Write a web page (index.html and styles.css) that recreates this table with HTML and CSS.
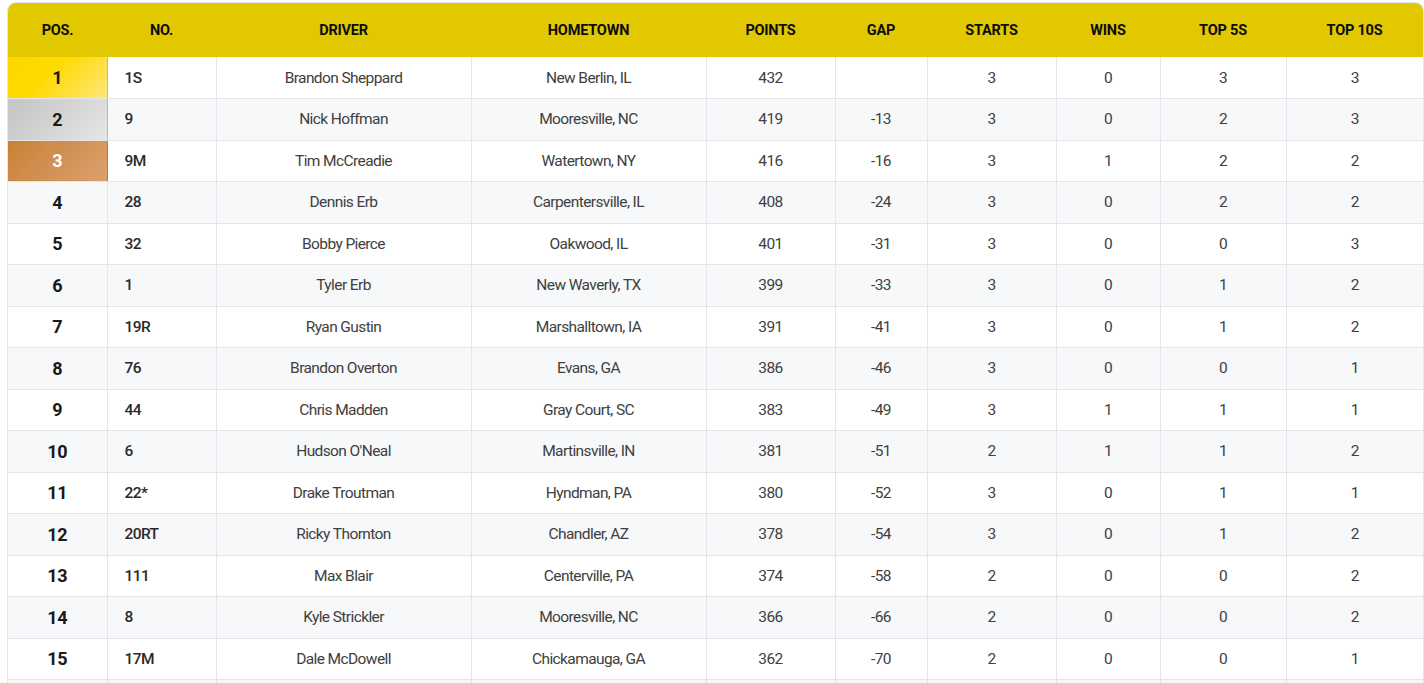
FILE: index.html
```html
<!DOCTYPE html>
<html lang="en">
<head>
<meta charset="utf-8">
<title>Points Standings</title>
<link rel="stylesheet" href="styles.css">
</head>
<body>
<div class="wrap">
<div class="card">
<table class="standings">
<colgroup>
<col class="c-pos"><col class="c-no"><col class="c-driver"><col class="c-home"><col class="c-pts"><col class="c-gap"><col class="c-starts"><col class="c-wins"><col class="c-t5"><col class="c-t10">
</colgroup>
<thead>
<tr><th>POS.</th><th>NO.</th><th>DRIVER</th><th>HOMETOWN</th><th>POINTS</th><th>GAP</th><th>STARTS</th><th>WINS</th><th>TOP 5S</th><th>TOP 10S</th></tr>
</thead>
<tbody>
<tr><td class="pos gold">1</td><td class="no">1S</td><td>Brandon Sheppard</td><td>New Berlin, IL</td><td>432</td><td></td><td>3</td><td>0</td><td>3</td><td>3</td></tr>
<tr><td class="pos silver">2</td><td class="no">9</td><td>Nick Hoffman</td><td>Mooresville, NC</td><td>419</td><td>-13</td><td>3</td><td>0</td><td>2</td><td>3</td></tr>
<tr><td class="pos bronze">3</td><td class="no">9M</td><td>Tim McCreadie</td><td>Watertown, NY</td><td>416</td><td>-16</td><td>3</td><td>1</td><td>2</td><td>2</td></tr>
<tr><td class="pos">4</td><td class="no">28</td><td>Dennis Erb</td><td>Carpentersville, IL</td><td>408</td><td>-24</td><td>3</td><td>0</td><td>2</td><td>2</td></tr>
<tr><td class="pos">5</td><td class="no">32</td><td>Bobby Pierce</td><td>Oakwood, IL</td><td>401</td><td>-31</td><td>3</td><td>0</td><td>0</td><td>3</td></tr>
<tr><td class="pos">6</td><td class="no">1</td><td>Tyler Erb</td><td>New Waverly, TX</td><td>399</td><td>-33</td><td>3</td><td>0</td><td>1</td><td>2</td></tr>
<tr><td class="pos">7</td><td class="no">19R</td><td>Ryan Gustin</td><td>Marshalltown, IA</td><td>391</td><td>-41</td><td>3</td><td>0</td><td>1</td><td>2</td></tr>
<tr><td class="pos">8</td><td class="no">76</td><td>Brandon Overton</td><td>Evans, GA</td><td>386</td><td>-46</td><td>3</td><td>0</td><td>0</td><td>1</td></tr>
<tr><td class="pos">9</td><td class="no">44</td><td>Chris Madden</td><td>Gray Court, SC</td><td>383</td><td>-49</td><td>3</td><td>1</td><td>1</td><td>1</td></tr>
<tr><td class="pos">10</td><td class="no">6</td><td>Hudson O'Neal</td><td>Martinsville, IN</td><td>381</td><td>-51</td><td>2</td><td>1</td><td>1</td><td>2</td></tr>
<tr><td class="pos">11</td><td class="no">22*</td><td>Drake Troutman</td><td>Hyndman, PA</td><td>380</td><td>-52</td><td>3</td><td>0</td><td>1</td><td>1</td></tr>
<tr><td class="pos">12</td><td class="no">20RT</td><td>Ricky Thornton</td><td>Chandler, AZ</td><td>378</td><td>-54</td><td>3</td><td>0</td><td>1</td><td>2</td></tr>
<tr><td class="pos">13</td><td class="no">111</td><td>Max Blair</td><td>Centerville, PA</td><td>374</td><td>-58</td><td>2</td><td>0</td><td>0</td><td>2</td></tr>
<tr><td class="pos">14</td><td class="no">8</td><td>Kyle Strickler</td><td>Mooresville, NC</td><td>366</td><td>-66</td><td>2</td><td>0</td><td>0</td><td>2</td></tr>
<tr><td class="pos">15</td><td class="no">17M</td><td>Dale McDowell</td><td>Chickamauga, GA</td><td>362</td><td>-70</td><td>2</td><td>0</td><td>0</td><td>1</td></tr>
<tr class="cut"><td></td><td></td><td></td><td></td><td></td><td></td><td></td><td></td><td></td><td></td></tr>
</tbody>
</table>
</div>
</div>
</body>
</html>
```
FILE: styles.css
```css
html, body {
  margin: 0;
  padding: 0;
  background: #ffffff;
}
body {
  font-family: Roboto, "Liberation Sans", sans-serif;
  color: #3a3a3a;
}
.wrap {
  padding: 2px 0 0 7px;
  width: 1417px;
  height: 681px;
  overflow: hidden;
}
.card {
  border: 1px solid #e3e5e9;
  border-radius: 9px 9px 0 0;
  overflow: hidden;
}
.standings {
  border-collapse: collapse;
  width: 1415px;
  table-layout: fixed;
}
.c-pos { width: 99px; }
.c-no { width: 109px; }
.c-driver { width: 255px; }
.c-home { width: 235px; }
.c-pts { width: 129px; }
.c-gap { width: 92px; }
.c-starts { width: 129px; }
.c-wins { width: 104px; }
.c-t5 { width: 126px; }
.c-t10 { width: 137px; }
.standings thead th {
  background: #e2c800;
  color: #0d0d0d;
  font-weight: 700;
  font-size: 14.5px;
  letter-spacing: -0.2px;
  height: 54px;
  padding: 0;
  text-align: center;
  vertical-align: middle;
}
.standings tbody tr {
  height: 41.5px;
}
.standings tbody tr:nth-child(even) {
  background: #f7f8fa;
}
.standings td {
  border: 1px solid #e3e5e9;
  border-top: none;
  padding: 0;
  text-align: center;
  vertical-align: middle;
  font-size: 15.5px;
  letter-spacing: -0.6px;
  color: #404040;
}
.standings td:first-child { border-left: none; }
.standings td:last-child { border-right: none; }
.standings td.no {
  text-align: left;
  padding-left: 17px;
  color: #2a2a2a;
  font-weight: 500;
}
.standings td.pos {
  font-weight: 700;
  font-size: 18px;
  letter-spacing: -0.3px;
  color: #1a1a1a;
}
.standings td.gold {
  background: linear-gradient(135deg, #ffd700 0%, #ffd900 40%, #ffe77a 100%);
  border-right-color: #e8c400;
}
.standings td.silver {
  background: linear-gradient(135deg, #c4c4c4 0%, #d4d4d4 50%, #e6e6e6 100%);
  border-right-color: #b8b8b8;
}
.standings td.bronze {
  background: linear-gradient(135deg, #c97f30 0%, #d19155 50%, #dca06c 100%);
  border-right-color: #c07a30;
  color: #ffffff;
}
```
